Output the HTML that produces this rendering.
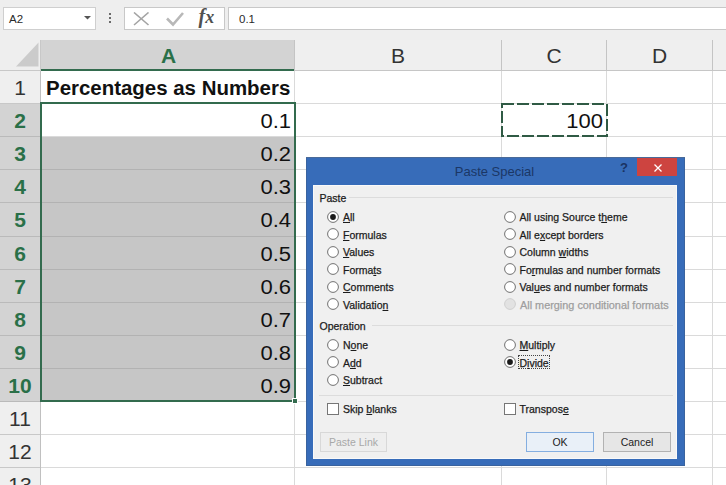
<!DOCTYPE html>
<html><head><meta charset="utf-8"><style>
html,body{margin:0;padding:0;}
body{width:726px;height:485px;overflow:hidden;position:relative;background:#fff;font-family:"Liberation Sans", sans-serif;}
u{text-decoration:underline;text-underline-offset:1px}
</style></head><body>
<div style="position:absolute;left:0px;top:0px;width:726px;height:40px;background:#eeeeee"></div>
<div style="position:absolute;left:3px;top:7px;width:93px;height:23px;background:#fff;border:1px solid #cfcfcf;box-sizing:border-box"></div>
<div style="position:absolute;left:9px;top:13px;white-space:nowrap;font-size:11.5px;color:#2a2a2a">A2</div>
<svg style="position:absolute;left:84px;top:16px" width="7" height="5"><path d="M0 0H7L3.5 3.5Z" fill="#555"/></svg>
<div style="position:absolute;left:109px;top:13px;width:2px;height:2px;background:#6a6a6a"></div>
<div style="position:absolute;left:109px;top:17px;width:2px;height:2px;background:#6a6a6a"></div>
<div style="position:absolute;left:109px;top:21px;width:2px;height:2px;background:#6a6a6a"></div>
<div style="position:absolute;left:124px;top:7px;width:101px;height:23px;background:#fff;border:1px solid #c8c8c8;box-sizing:border-box"></div>
<svg style="position:absolute;left:133px;top:12px" width="17" height="14"><path d="M1 0.5L15.5 13M15.5 0.5L1 13" stroke="#a4a4a4" stroke-width="1.6" fill="none"/></svg>
<svg style="position:absolute;left:165px;top:11px" width="20" height="16"><path d="M2 7.5L8 13.5L18 2" stroke="#b8b8b8" stroke-width="2.6" fill="none"/></svg>
<div style="position:absolute;left:198.5px;top:5px;white-space:nowrap;font-family:'Liberation Serif',serif;font-size:20px;font-weight:bold;color:#505050"><i>f</i><i style='font-size:18px'>x</i></div>
<div style="position:absolute;left:228px;top:7px;width:510px;height:23px;background:#fff;border:1px solid #c8c8c8;box-sizing:border-box"></div>
<div style="position:absolute;left:239px;top:13px;white-space:nowrap;font-size:11.5px;color:#2a2a2a">0.1</div>
<div style="position:absolute;left:0px;top:40px;width:40px;height:30px;background:#eeeeee"></div>
<svg style="position:absolute;left:0px;top:40px" width="40" height="30"><path d="M38.5 2.5V26.5H16Z" fill="#cbcbcb"/></svg>
<div style="position:absolute;left:0px;top:70px;width:40px;height:1px;background:#c8c8c8"></div>
<div style="position:absolute;left:40px;top:40px;width:1px;height:31px;background:#c8c8c8"></div>
<div style="position:absolute;left:41px;top:40px;width:253px;height:29px;background:#d3d3d3"></div>
<div style="position:absolute;left:41px;top:69px;width:254px;height:2px;background:#336b4e"></div>
<div style="position:absolute;left:42px;top:44px;white-space:nowrap;width:253px;text-align:center;font-size:21px;font-weight:bold;color:#2a7048">A</div>
<div style="position:absolute;left:295px;top:40px;width:206px;height:30px;background:#efefef"></div>
<div style="position:absolute;left:294px;top:70px;width:207px;height:1px;background:#c6c6c6"></div>
<div style="position:absolute;left:295px;top:44px;white-space:nowrap;width:206px;text-align:center;font-size:21px;color:#333">B</div>
<div style="position:absolute;left:502px;top:40px;width:104px;height:30px;background:#efefef"></div>
<div style="position:absolute;left:501px;top:70px;width:105px;height:1px;background:#c6c6c6"></div>
<div style="position:absolute;left:502px;top:44px;white-space:nowrap;width:104px;text-align:center;font-size:21px;color:#333">C</div>
<div style="position:absolute;left:607px;top:40px;width:105px;height:30px;background:#efefef"></div>
<div style="position:absolute;left:606px;top:70px;width:106px;height:1px;background:#c6c6c6"></div>
<div style="position:absolute;left:607px;top:44px;white-space:nowrap;width:105px;text-align:center;font-size:21px;color:#333">D</div>
<div style="position:absolute;left:713px;top:40px;width:117px;height:30px;background:#efefef"></div>
<div style="position:absolute;left:712px;top:70px;width:118px;height:1px;background:#c6c6c6"></div>
<div style="position:absolute;left:294px;top:40px;width:1px;height:30px;background:#c4c4c4"></div>
<div style="position:absolute;left:501px;top:40px;width:1px;height:30px;background:#c4c4c4"></div>
<div style="position:absolute;left:606px;top:40px;width:1px;height:30px;background:#c4c4c4"></div>
<div style="position:absolute;left:712px;top:40px;width:1px;height:30px;background:#c4c4c4"></div>
<div style="position:absolute;left:41px;top:71px;width:700px;height:420px;background:#fff"></div>
<div style="position:absolute;left:0px;top:71px;width:40px;height:32px;background:#efefef"></div>
<div style="position:absolute;left:0px;top:103px;width:40px;height:1px;background:#c8c8c8"></div>
<div style="position:absolute;left:40px;top:71px;width:1px;height:33px;background:#c0c0c0"></div>
<div style="position:absolute;left:0px;top:76px;white-space:nowrap;width:40px;text-align:center;font-size:21px;color:#333">1</div>
<div style="position:absolute;left:41px;top:103px;width:700px;height:1px;background:#dadada"></div>
<div style="position:absolute;left:0px;top:104px;width:40px;height:32px;background:#d3d3d3"></div>
<div style="position:absolute;left:0px;top:136px;width:40px;height:1px;background:#bababa"></div>
<div style="position:absolute;left:40px;top:104px;width:1px;height:33px;background:#c0c0c0"></div>
<div style="position:absolute;left:0px;top:109px;white-space:nowrap;width:40px;text-align:center;font-size:21px;font-weight:bold;color:#2a7048">2</div>
<div style="position:absolute;left:41px;top:136px;width:700px;height:1px;background:#dadada"></div>
<div style="position:absolute;left:0px;top:137px;width:40px;height:32px;background:#d3d3d3"></div>
<div style="position:absolute;left:0px;top:169px;width:40px;height:1px;background:#bababa"></div>
<div style="position:absolute;left:40px;top:137px;width:1px;height:33px;background:#c0c0c0"></div>
<div style="position:absolute;left:0px;top:142px;white-space:nowrap;width:40px;text-align:center;font-size:21px;font-weight:bold;color:#2a7048">3</div>
<div style="position:absolute;left:41px;top:169px;width:700px;height:1px;background:#dadada"></div>
<div style="position:absolute;left:0px;top:170px;width:40px;height:32px;background:#d3d3d3"></div>
<div style="position:absolute;left:0px;top:202px;width:40px;height:1px;background:#bababa"></div>
<div style="position:absolute;left:40px;top:170px;width:1px;height:33px;background:#c0c0c0"></div>
<div style="position:absolute;left:0px;top:175px;white-space:nowrap;width:40px;text-align:center;font-size:21px;font-weight:bold;color:#2a7048">4</div>
<div style="position:absolute;left:41px;top:202px;width:700px;height:1px;background:#dadada"></div>
<div style="position:absolute;left:0px;top:203px;width:40px;height:33px;background:#d3d3d3"></div>
<div style="position:absolute;left:0px;top:236px;width:40px;height:1px;background:#bababa"></div>
<div style="position:absolute;left:40px;top:203px;width:1px;height:34px;background:#c0c0c0"></div>
<div style="position:absolute;left:0px;top:208px;white-space:nowrap;width:40px;text-align:center;font-size:21px;font-weight:bold;color:#2a7048">5</div>
<div style="position:absolute;left:41px;top:236px;width:700px;height:1px;background:#dadada"></div>
<div style="position:absolute;left:0px;top:237px;width:40px;height:32px;background:#d3d3d3"></div>
<div style="position:absolute;left:0px;top:269px;width:40px;height:1px;background:#bababa"></div>
<div style="position:absolute;left:40px;top:237px;width:1px;height:33px;background:#c0c0c0"></div>
<div style="position:absolute;left:0px;top:242px;white-space:nowrap;width:40px;text-align:center;font-size:21px;font-weight:bold;color:#2a7048">6</div>
<div style="position:absolute;left:41px;top:269px;width:700px;height:1px;background:#dadada"></div>
<div style="position:absolute;left:0px;top:270px;width:40px;height:32px;background:#d3d3d3"></div>
<div style="position:absolute;left:0px;top:302px;width:40px;height:1px;background:#bababa"></div>
<div style="position:absolute;left:40px;top:270px;width:1px;height:33px;background:#c0c0c0"></div>
<div style="position:absolute;left:0px;top:275px;white-space:nowrap;width:40px;text-align:center;font-size:21px;font-weight:bold;color:#2a7048">7</div>
<div style="position:absolute;left:41px;top:302px;width:700px;height:1px;background:#dadada"></div>
<div style="position:absolute;left:0px;top:303px;width:40px;height:32px;background:#d3d3d3"></div>
<div style="position:absolute;left:0px;top:335px;width:40px;height:1px;background:#bababa"></div>
<div style="position:absolute;left:40px;top:303px;width:1px;height:33px;background:#c0c0c0"></div>
<div style="position:absolute;left:0px;top:308px;white-space:nowrap;width:40px;text-align:center;font-size:21px;font-weight:bold;color:#2a7048">8</div>
<div style="position:absolute;left:41px;top:335px;width:700px;height:1px;background:#dadada"></div>
<div style="position:absolute;left:0px;top:336px;width:40px;height:32px;background:#d3d3d3"></div>
<div style="position:absolute;left:0px;top:368px;width:40px;height:1px;background:#bababa"></div>
<div style="position:absolute;left:40px;top:336px;width:1px;height:33px;background:#c0c0c0"></div>
<div style="position:absolute;left:0px;top:341px;white-space:nowrap;width:40px;text-align:center;font-size:21px;font-weight:bold;color:#2a7048">9</div>
<div style="position:absolute;left:41px;top:368px;width:700px;height:1px;background:#dadada"></div>
<div style="position:absolute;left:0px;top:369px;width:40px;height:32px;background:#d3d3d3"></div>
<div style="position:absolute;left:0px;top:401px;width:40px;height:1px;background:#bababa"></div>
<div style="position:absolute;left:40px;top:369px;width:1px;height:33px;background:#c0c0c0"></div>
<div style="position:absolute;left:0px;top:374px;white-space:nowrap;width:40px;text-align:center;font-size:21px;font-weight:bold;color:#2a7048">10</div>
<div style="position:absolute;left:41px;top:401px;width:700px;height:1px;background:#dadada"></div>
<div style="position:absolute;left:0px;top:402px;width:40px;height:32px;background:#efefef"></div>
<div style="position:absolute;left:0px;top:434px;width:40px;height:1px;background:#c8c8c8"></div>
<div style="position:absolute;left:40px;top:402px;width:1px;height:33px;background:#c0c0c0"></div>
<div style="position:absolute;left:0px;top:407px;white-space:nowrap;width:40px;text-align:center;font-size:21px;color:#333">11</div>
<div style="position:absolute;left:41px;top:434px;width:700px;height:1px;background:#dadada"></div>
<div style="position:absolute;left:0px;top:435px;width:40px;height:32px;background:#efefef"></div>
<div style="position:absolute;left:0px;top:467px;width:40px;height:1px;background:#c8c8c8"></div>
<div style="position:absolute;left:40px;top:435px;width:1px;height:33px;background:#c0c0c0"></div>
<div style="position:absolute;left:0px;top:440px;white-space:nowrap;width:40px;text-align:center;font-size:21px;color:#333">12</div>
<div style="position:absolute;left:41px;top:467px;width:700px;height:1px;background:#dadada"></div>
<div style="position:absolute;left:0px;top:468px;width:40px;height:32px;background:#efefef"></div>
<div style="position:absolute;left:0px;top:500px;width:40px;height:1px;background:#c8c8c8"></div>
<div style="position:absolute;left:40px;top:468px;width:1px;height:33px;background:#c0c0c0"></div>
<div style="position:absolute;left:0px;top:473px;white-space:nowrap;width:40px;text-align:center;font-size:21px;color:#333">13</div>
<div style="position:absolute;left:41px;top:500px;width:700px;height:1px;background:#dadada"></div>
<div style="position:absolute;left:294px;top:71px;width:1px;height:420px;background:#dadada"></div>
<div style="position:absolute;left:501px;top:71px;width:1px;height:420px;background:#dadada"></div>
<div style="position:absolute;left:606px;top:71px;width:1px;height:420px;background:#dadada"></div>
<div style="position:absolute;left:712px;top:71px;width:1px;height:420px;background:#dadada"></div>
<div style="position:absolute;left:42px;top:137px;width:252px;height:265px;background:#c6c6c6"></div>
<div style="position:absolute;left:42px;top:169px;width:252px;height:1px;background:#b2b2b2"></div>
<div style="position:absolute;left:42px;top:202px;width:252px;height:1px;background:#b2b2b2"></div>
<div style="position:absolute;left:42px;top:236px;width:252px;height:1px;background:#b2b2b2"></div>
<div style="position:absolute;left:42px;top:269px;width:252px;height:1px;background:#b2b2b2"></div>
<div style="position:absolute;left:42px;top:302px;width:252px;height:1px;background:#b2b2b2"></div>
<div style="position:absolute;left:42px;top:335px;width:252px;height:1px;background:#b2b2b2"></div>
<div style="position:absolute;left:42px;top:368px;width:252px;height:1px;background:#b2b2b2"></div>
<div style="position:absolute;left:40px;top:102px;width:256px;height:300px;border:2px solid #336b4e;box-sizing:border-box"></div>
<div style="position:absolute;left:292px;top:398px;width:6px;height:6px;background:#336b4e;border:1px solid #fff;box-sizing:border-box"></div>
<div style="position:absolute;left:46px;top:77px;white-space:nowrap;font-size:20px;font-weight:bold;color:#111;transform:scaleX(1.022);transform-origin:0 0">Percentages as Numbers</div>
<div style="position:absolute;left:150px;top:110px;white-space:nowrap;width:141px;text-align:right;font-size:20px;color:#111;transform:scaleX(1.1);transform-origin:100% 50%">0.1</div>
<div style="position:absolute;left:150px;top:143px;white-space:nowrap;width:141px;text-align:right;font-size:20px;color:#111;transform:scaleX(1.1);transform-origin:100% 50%">0.2</div>
<div style="position:absolute;left:150px;top:176px;white-space:nowrap;width:141px;text-align:right;font-size:20px;color:#111;transform:scaleX(1.1);transform-origin:100% 50%">0.3</div>
<div style="position:absolute;left:150px;top:209px;white-space:nowrap;width:141px;text-align:right;font-size:20px;color:#111;transform:scaleX(1.1);transform-origin:100% 50%">0.4</div>
<div style="position:absolute;left:150px;top:243px;white-space:nowrap;width:141px;text-align:right;font-size:20px;color:#111;transform:scaleX(1.1);transform-origin:100% 50%">0.5</div>
<div style="position:absolute;left:150px;top:276px;white-space:nowrap;width:141px;text-align:right;font-size:20px;color:#111;transform:scaleX(1.1);transform-origin:100% 50%">0.6</div>
<div style="position:absolute;left:150px;top:309px;white-space:nowrap;width:141px;text-align:right;font-size:20px;color:#111;transform:scaleX(1.1);transform-origin:100% 50%">0.7</div>
<div style="position:absolute;left:150px;top:342px;white-space:nowrap;width:141px;text-align:right;font-size:20px;color:#111;transform:scaleX(1.1);transform-origin:100% 50%">0.8</div>
<div style="position:absolute;left:150px;top:375px;white-space:nowrap;width:141px;text-align:right;font-size:20px;color:#111;transform:scaleX(1.1);transform-origin:100% 50%">0.9</div>
<div style="position:absolute;left:501px;top:110px;white-space:nowrap;width:102px;text-align:right;font-size:20px;color:#111;transform:scaleX(1.1);transform-origin:100% 50%">100</div>
<svg style="position:absolute;left:501px;top:103px" width="107" height="34"><rect x="1" y="1" width="105" height="32" fill="none" stroke="#2f5a44" stroke-width="2" stroke-dasharray="12 3"/></svg>
<div style="position:absolute;left:306px;top:157px;width:379px;height:309px;background:#376cb9;border:1px solid #3a639e;box-sizing:border-box"></div>
<div style="position:absolute;left:306px;top:157px;width:379px;height:1px;background:#4a6a98"></div>
<div style="position:absolute;left:313px;top:185px;width:364px;height:274px;background:#f0f0f0;border:1px solid #f9f9f9;box-sizing:border-box"></div>
<div style="position:absolute;left:305px;top:164px;white-space:nowrap;width:379px;text-align:center;font-size:13px;color:#1b3766">Paste Special</div>
<div style="position:absolute;left:620px;top:160px;white-space:nowrap;font-size:13px;font-weight:bold;color:#1a3362">?</div>
<div style="position:absolute;left:637px;top:158px;width:40px;height:18px;background:#cd4440"></div>
<svg style="position:absolute;left:654px;top:163.5px" width="8" height="8"><path d="M0.5 0.5L7.5 7.5M7.5 0.5L0.5 7.5" stroke="#fff" stroke-width="1.3"/></svg>
<div style="position:absolute;left:319.5px;top:192.3px;white-space:nowrap;font-size:10.5px;color:#1c1c1c;-webkit-text-stroke:0.25px #1c1c1c">Paste</div>
<div style="position:absolute;left:349px;top:197px;width:324px;height:1px;background:#dcdcdc"></div>
<svg style="position:absolute;left:327px;top:210.8px" width="12" height="12"><circle cx="6" cy="6" r="5.4" fill="#fff" stroke="#707070" stroke-width="1"/><circle cx="6" cy="6" r="2.9" fill="#1a1a1a"/></svg>
<div style="position:absolute;left:343px;top:211.10000000000002px;white-space:nowrap;font-size:10.5px;color:#1c1c1c;-webkit-text-stroke:0.25px #1c1c1c"><u>A</u>ll</div>
<svg style="position:absolute;left:503.5px;top:210.8px" width="12" height="12"><circle cx="6" cy="6" r="5.4" fill="#fff" stroke="#707070" stroke-width="1"/></svg>
<div style="position:absolute;left:519.5px;top:211.10000000000002px;white-space:nowrap;font-size:10.5px;color:#1c1c1c;-webkit-text-stroke:0.25px #1c1c1c">All using Source t<u>h</u>eme</div>
<svg style="position:absolute;left:327px;top:228.3px" width="12" height="12"><circle cx="6" cy="6" r="5.4" fill="#fff" stroke="#707070" stroke-width="1"/></svg>
<div style="position:absolute;left:343px;top:228.60000000000002px;white-space:nowrap;font-size:10.5px;color:#1c1c1c;-webkit-text-stroke:0.25px #1c1c1c"><u>F</u>ormulas</div>
<svg style="position:absolute;left:503.5px;top:228.3px" width="12" height="12"><circle cx="6" cy="6" r="5.4" fill="#fff" stroke="#707070" stroke-width="1"/></svg>
<div style="position:absolute;left:519.5px;top:228.60000000000002px;white-space:nowrap;font-size:10.5px;color:#1c1c1c;-webkit-text-stroke:0.25px #1c1c1c">All e<u>x</u>cept borders</div>
<svg style="position:absolute;left:327px;top:245.8px" width="12" height="12"><circle cx="6" cy="6" r="5.4" fill="#fff" stroke="#707070" stroke-width="1"/></svg>
<div style="position:absolute;left:343px;top:246.10000000000002px;white-space:nowrap;font-size:10.5px;color:#1c1c1c;-webkit-text-stroke:0.25px #1c1c1c"><u>V</u>alues</div>
<svg style="position:absolute;left:503.5px;top:245.8px" width="12" height="12"><circle cx="6" cy="6" r="5.4" fill="#fff" stroke="#707070" stroke-width="1"/></svg>
<div style="position:absolute;left:519.5px;top:246.10000000000002px;white-space:nowrap;font-size:10.5px;color:#1c1c1c;-webkit-text-stroke:0.25px #1c1c1c">Column <u>w</u>idths</div>
<svg style="position:absolute;left:327px;top:263.3px" width="12" height="12"><circle cx="6" cy="6" r="5.4" fill="#fff" stroke="#707070" stroke-width="1"/></svg>
<div style="position:absolute;left:343px;top:263.6px;white-space:nowrap;font-size:10.5px;color:#1c1c1c;-webkit-text-stroke:0.25px #1c1c1c">Forma<u>t</u>s</div>
<svg style="position:absolute;left:503.5px;top:263.3px" width="12" height="12"><circle cx="6" cy="6" r="5.4" fill="#fff" stroke="#707070" stroke-width="1"/></svg>
<div style="position:absolute;left:519.5px;top:263.6px;white-space:nowrap;font-size:10.5px;color:#1c1c1c;-webkit-text-stroke:0.25px #1c1c1c">Fo<u>r</u>mulas and number formats</div>
<svg style="position:absolute;left:327px;top:280.8px" width="12" height="12"><circle cx="6" cy="6" r="5.4" fill="#fff" stroke="#707070" stroke-width="1"/></svg>
<div style="position:absolute;left:343px;top:281.1px;white-space:nowrap;font-size:10.5px;color:#1c1c1c;-webkit-text-stroke:0.25px #1c1c1c"><u>C</u>omments</div>
<svg style="position:absolute;left:503.5px;top:280.8px" width="12" height="12"><circle cx="6" cy="6" r="5.4" fill="#fff" stroke="#707070" stroke-width="1"/></svg>
<div style="position:absolute;left:519.5px;top:281.1px;white-space:nowrap;font-size:10.5px;color:#1c1c1c;-webkit-text-stroke:0.25px #1c1c1c">Val<u>u</u>es and number formats</div>
<svg style="position:absolute;left:327px;top:298.3px" width="12" height="12"><circle cx="6" cy="6" r="5.4" fill="#fff" stroke="#707070" stroke-width="1"/></svg>
<div style="position:absolute;left:343px;top:298.6px;white-space:nowrap;font-size:10.5px;color:#1c1c1c;-webkit-text-stroke:0.25px #1c1c1c">Validatio<u>n</u></div>
<svg style="position:absolute;left:503.5px;top:298.3px" width="12" height="12"><circle cx="6" cy="6" r="5.4" fill="#e2e2e2" stroke="#cfcfcf" stroke-width="1"/></svg>
<div style="position:absolute;left:519.5px;top:298.6px;white-space:nowrap;font-size:10.5px;color:#9e9e9e;-webkit-text-stroke:0.25px #9e9e9e;transform:scaleX(1.035);transform-origin:0 0">All merging conditional formats</div>
<div style="position:absolute;left:319.5px;top:320.3px;white-space:nowrap;font-size:10.5px;color:#1c1c1c;-webkit-text-stroke:0.25px #1c1c1c">Operation</div>
<div style="position:absolute;left:372px;top:325px;width:301px;height:1px;background:#dcdcdc"></div>
<svg style="position:absolute;left:327px;top:338.9px" width="12" height="12"><circle cx="6" cy="6" r="5.4" fill="#fff" stroke="#707070" stroke-width="1"/></svg>
<div style="position:absolute;left:343px;top:339.2px;white-space:nowrap;font-size:10.5px;color:#1c1c1c;-webkit-text-stroke:0.25px #1c1c1c">N<u>o</u>ne</div>
<svg style="position:absolute;left:327px;top:356.29999999999995px" width="12" height="12"><circle cx="6" cy="6" r="5.4" fill="#fff" stroke="#707070" stroke-width="1"/></svg>
<div style="position:absolute;left:343px;top:356.59999999999997px;white-space:nowrap;font-size:10.5px;color:#1c1c1c;-webkit-text-stroke:0.25px #1c1c1c">A<u>d</u>d</div>
<svg style="position:absolute;left:327px;top:373.7px" width="12" height="12"><circle cx="6" cy="6" r="5.4" fill="#fff" stroke="#707070" stroke-width="1"/></svg>
<div style="position:absolute;left:343px;top:374.0px;white-space:nowrap;font-size:10.5px;color:#1c1c1c;-webkit-text-stroke:0.25px #1c1c1c"><u>S</u>ubtract</div>
<svg style="position:absolute;left:503.5px;top:338.9px" width="12" height="12"><circle cx="6" cy="6" r="5.4" fill="#fff" stroke="#707070" stroke-width="1"/></svg>
<div style="position:absolute;left:519.5px;top:339.2px;white-space:nowrap;font-size:10.5px;color:#1c1c1c;-webkit-text-stroke:0.25px #1c1c1c"><u>M</u>ultiply</div>
<svg style="position:absolute;left:503.5px;top:356.3px" width="12" height="12"><circle cx="6" cy="6" r="5.4" fill="#fff" stroke="#707070" stroke-width="1"/><circle cx="6" cy="6" r="2.9" fill="#1a1a1a"/></svg>
<div style="position:absolute;left:519.5px;top:356.6px;white-space:nowrap;font-size:10.5px;color:#1c1c1c;-webkit-text-stroke:0.25px #1c1c1c">D<u>i</u>vide</div>
<div style="position:absolute;left:518px;top:355px;width:32px;height:14px;border:1px dotted #444;box-sizing:border-box"></div>
<div style="position:absolute;left:319px;top:395px;width:354px;height:1px;background:#dcdcdc"></div>
<div style="position:absolute;left:327px;top:403px;width:12px;height:12px;background:#fff;border:1px solid #767676;box-sizing:border-box"></div>
<div style="position:absolute;left:343px;top:403.3px;white-space:nowrap;font-size:10.5px;color:#1c1c1c;-webkit-text-stroke:0.25px #1c1c1c">Skip <u>b</u>lanks</div>
<div style="position:absolute;left:504px;top:403px;width:12px;height:12px;background:#fff;border:1px solid #767676;box-sizing:border-box"></div>
<div style="position:absolute;left:519.5px;top:403.3px;white-space:nowrap;font-size:10.5px;color:#1c1c1c;-webkit-text-stroke:0.25px #1c1c1c">Transpos<u>e</u></div>
<div style="position:absolute;left:320px;top:432px;width:67px;height:20px;background:#eeeeee;border:1px solid #d8d8d8;box-sizing:border-box"></div>
<div style="position:absolute;left:320px;top:436px;white-space:nowrap;width:67px;text-align:center;font-size:10.5px;color:#a8a8a8">Paste Link</div>
<div style="position:absolute;left:526px;top:432px;width:68px;height:20px;background:#e9f0f8;border:1px solid #84aee0;box-sizing:border-box"></div>
<div style="position:absolute;left:526px;top:436px;white-space:nowrap;width:68px;text-align:center;font-size:10.5px;color:#222">OK</div>
<div style="position:absolute;left:603px;top:432px;width:68px;height:20px;background:#e6e6e6;border:1px solid #b2b2b2;box-sizing:border-box"></div>
<div style="position:absolute;left:603px;top:436px;white-space:nowrap;width:68px;text-align:center;font-size:10.5px;color:#222">Cancel</div>
</body></html>
